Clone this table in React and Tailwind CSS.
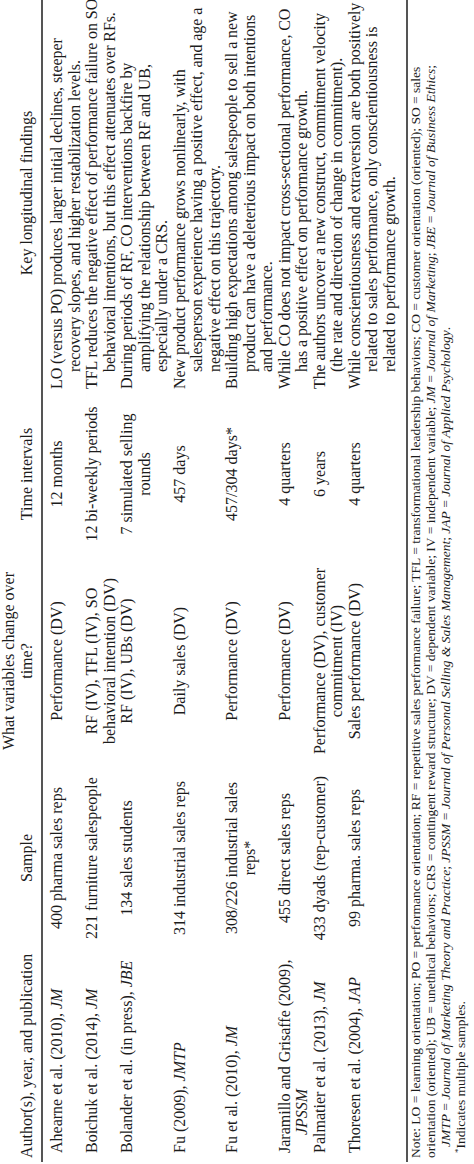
import React from 'react';

const serif = "font-['Liberation_Serif','Times_New_Roman',serif]";

const rows = [
  {
    author: [<>Ahearne et al. (2010), <i>JM</i></>],
    sample: ['400 pharma sales reps'],
    vars: ['Performance (DV)'],
    time: ['12 months'],
    findings: [
      'LO (versus PO) produces larger initial declines, steeper',
      'recovery slopes, and higher restabilization levels.',
    ],
  },
  {
    author: [<>Boichuk et al. (2014), <i>JM</i></>],
    sample: ['221 furniture salespeople'],
    vars: ['RF (IV), TFL (IV), SO', 'behavioral intention (DV)'],
    time: ['12 bi-weekly periods'],
    findings: [
      'TFL reduces the negative effect of performance failure on SO',
      'behavioral intentions, but this effect attenuates over RFs.',
    ],
  },
  {
    author: [<>Bolander et al. (in press), <i>JBE</i></>],
    sample: ['134 sales students'],
    vars: ['RF (IV), UBs (DV)'],
    time: ['7 simulated selling', 'rounds'],
    findings: [
      'During periods of RF, CO interventions backfire by',
      'amplifying the relationship between RF and UB,',
      'especially under a CRS.',
    ],
  },
  {
    author: [<>Fu (2009), <i>JMTP</i></>],
    sample: ['314 industrial sales reps'],
    vars: ['Daily sales (DV)'],
    time: ['457 days'],
    findings: [
      'New product performance grows nonlinearly, with',
      'salesperson experience having a positive effect, and age a',
      'negative effect on this trajectory.',
    ],
  },
  {
    author: [<>Fu et al. (2010), <i>JM</i></>],
    sample: ['308/226 industrial sales', 'reps*'],
    vars: ['Performance (DV)'],
    time: ['457/304 days*'],
    findings: [
      'Building high expectations among salespeople to sell a new',
      'product can have a deleterious impact on both intentions',
      'and performance.',
    ],
  },
  {
    author: ['Jaramillo and Grisaffe (2009),', <i>JPSSM</i>],
    sample: ['455 direct sales reps'],
    vars: ['Performance (DV)'],
    time: ['4 quarters'],
    findings: [
      'While CO does not impact cross-sectional performance, CO',
      'has a positive effect on performance growth.',
    ],
  },
  {
    author: [<>Palmatier et al. (2013), <i>JM</i></>],
    sample: ['433 dyads (rep-customer)'],
    vars: ['Performance (DV), customer', 'commitment (IV)'],
    time: ['6 years'],
    findings: [
      'The authors uncover a new construct, commitment velocity',
      '(the rate and direction of change in commitment).',
    ],
  },
  {
    author: [<>Thoresen et al. (2004), <i>JAP</i></>],
    sample: ['99 pharma. sales reps'],
    vars: ['Sales performance (DV)'],
    time: ['4 quarters'],
    findings: [
      'While conscientiousness and extraversion are both positively',
      'related to sales performance, only conscientiousness is',
      'related to performance growth.',
    ],
  },
];

const Lines = ({ items, indent }) => (
  <>
    {items.map((t, i) => (
      <div key={i} className={`whitespace-nowrap ${i > 0 ? indent : ''}`}>
        {t}
      </div>
    ))}
  </>
);

export default function App() {
  return (
    <div className="w-[474px] h-[1164px] overflow-hidden bg-white">
      <div
        className={`w-[1180px] h-[474px] origin-top-left translate-y-[1164px] -rotate-90 ${serif} text-[16px] leading-[17.5px] text-[#1c1c1c]`}
      >
        {/* header */}
        <div className="flex items-end -mt-[2px] pb-[6px] border-b-2 border-[#555]">
          <div className="w-[215px] shrink-0 pl-[4px] whitespace-nowrap">Author(s), year, and publication</div>
          <div className="w-[178px] shrink-0 text-center">Sample</div>
          <div className="w-[216px] shrink-0 text-center">
            <div>What variables change over</div>
            <div>time?</div>
          </div>
          <div className="w-[158px] shrink-0 text-center">Time intervals</div>
          <div className="flex-1 text-center pr-[9px]">Key longitudinal findings</div>
        </div>

        {/* body */}
        <div className="pt-[5px] pb-[8px] border-b-2 border-[#555]">
          {rows.map((r, i) => (
            <div key={i} className="flex items-start">
              <div className="w-[215px] shrink-0 pl-[9px]">
                <Lines items={r.author} indent="pl-[18px]" />
              </div>
              <div className="w-[178px] shrink-0 text-center">
                <Lines items={r.sample} />
              </div>
              <div className="w-[216px] shrink-0 text-center">
                <Lines items={r.vars} />
              </div>
              <div className="w-[158px] shrink-0 text-center">
                <Lines items={r.time} />
              </div>
              <div className="flex-1 pl-[6px] tracking-[-0.08px]">
                <Lines items={r.findings} indent="pl-[17px]" />
              </div>
            </div>
          ))}
        </div>

        {/* note */}
        <div className="text-[13.5px] leading-[15px] whitespace-nowrap">
          <div className="pl-[4px]">
            Note: LO = learning orientation; PO = performance orientation; RF = repetitive sales performance failure; TFL = transformational leadership behaviors; CO = customer orientation (oriented); SO = sales
          </div>
          <div className="pl-[4px]">
            orientation (oriented); UB = unethical behaviors; CRS = contingent reward structure; DV = dependent variable; IV = independent variable; <i>JM</i> = <i>Journal of Marketing</i>; <i>JBE</i> = <i>Journal of Business Ethics</i>;
          </div>
          <div className="pl-[15px]">
            <i>JMTP</i> = <i>Journal of Marketing Theory and Practice</i>; <i>JPSSM</i> = <i>Journal of Personal Selling &amp; Sales Management</i>; <i>JAP</i> = <i>Journal of Applied Psychology</i>.
          </div>
          <div className="pl-[9px]">
            <sup className="text-[9px]">*</sup>Indicates multiple samples.
          </div>
        </div>
      </div>
    </div>
  );
}
